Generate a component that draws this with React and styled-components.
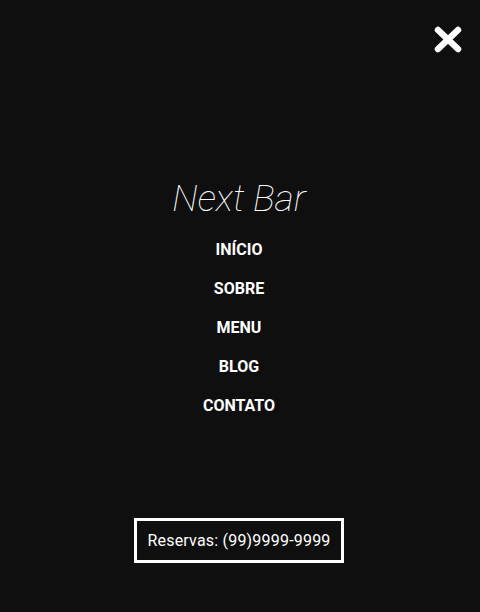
import React from "react";
import styled, { createGlobalStyle } from "styled-components";

const GlobalStyle = createGlobalStyle`
  html, body {
    margin: 0;
    padding: 0;
    background-color: #0f0f0f;
  }
  body {
    font-family: Roboto, "Liberation Sans", sans-serif;
    color: white;
  }
`;

const Overlay = styled.div`
  height: 100vh;
  min-height: 612px;
  box-sizing: border-box;
  padding-right: 2px;
  background-color: #0f0f0f;
  display: flex;
  flex-direction: column;
  align-items: center;
`;

const TopBar = styled.div`
  align-self: stretch;
  display: flex;
  justify-content: flex-end;
  padding: 26px 16px 0 0;
`;

const CloseButton = styled.button`
  background: none;
  border: none;
  padding: 0;
  width: 28px;
  height: 27px;
  cursor: pointer;
  display: flex;
`;

const Title = styled.h1`
  margin: 124px 0 10px;
  font-size: 37px;
  line-height: 43px;
  font-weight: 100;
  font-style: italic;
`;

const MenuList = styled.ul`
  list-style-type: none;
  margin: 0;
  padding: 0;
  display: flex;
  flex-direction: column;
  align-items: center;
`;

const MenuItem = styled.li`
  font-size: 16px;
  line-height: 39px;
  font-weight: 700;
`;

const Reservation = styled.div`
  margin-top: auto;
  margin-bottom: 49px;
  height: 45px;
  box-sizing: border-box;
  border: 3px solid white;
  padding: 0 10px;
  font-size: 16px;
  letter-spacing: 0.2px;
  line-height: 39px;
`;

const CloseIcon = () => (
  <svg width="28" height="27" viewBox="0 0 28 27">
    <path
      d="M4 4 L24 23 M24 4 L4 23"
      stroke="white"
      strokeWidth="6.5"
      strokeLinecap="round"
      fill="none"
    />
  </svg>
);

const App = () => {
  const menuItems = ["INÍCIO", "SOBRE", "MENU", "BLOG", "CONTATO"];
  return (
    <>
      <GlobalStyle />
      <Overlay>
        <TopBar>
          <CloseButton aria-label="Fechar">
            <CloseIcon />
          </CloseButton>
        </TopBar>
        <Title>Next Bar</Title>
        <MenuList>
          {menuItems.map((item) => (
            <MenuItem key={item}>{item}</MenuItem>
          ))}
        </MenuList>
        <Reservation>Reservas: (99)9999-9999</Reservation>
      </Overlay>
    </>
  );
};

export default App;
